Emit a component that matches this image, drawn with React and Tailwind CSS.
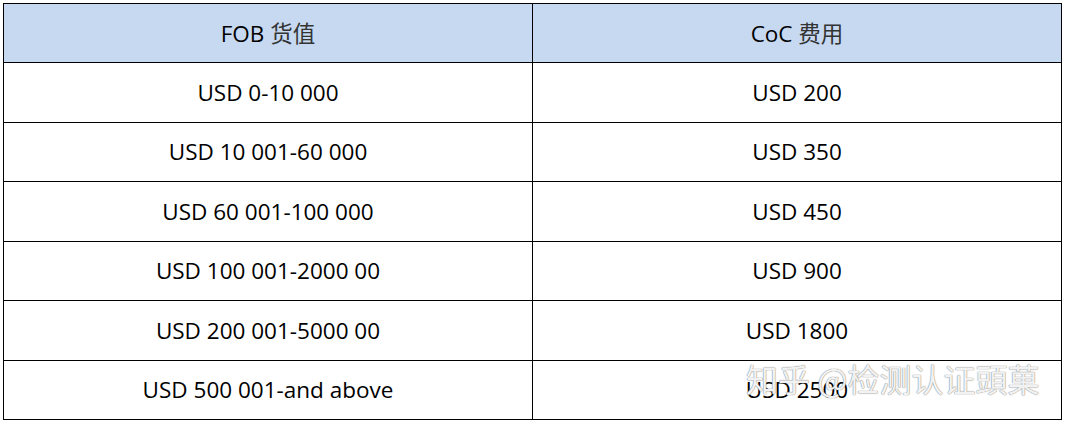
import React from "react";

const rows = [
  ["USD 0-10 000", "USD 200"],
  ["USD 10 001-60 000", "USD 350"],
  ["USD 60 001-100 000", "USD 450"],
  ["USD 100 001-2000 00", "USD 900"],
  ["USD 200 001-5000 00", "USD 1800"],
  ["USD 500 001-and above", "USD 2500"],
];

// alternating heights so the lines land on the same pixels as the picture
const heights = ["h-[60px]", "h-[59px]", "h-[60px]", "h-[59px]", "h-[60px]", "h-[59px]"];

const App = () => {
  return (
    <div className="w-[1066px] h-[424px] bg-white pt-[3px] pl-[3px] font-['Open_Sans','Noto_Sans_CJK_SC',sans-serif] text-[22.5px] text-black">
      <div className="relative w-[1059px]">
        <table className="w-full border-collapse border border-black table-fixed">
          <thead>
            <tr className="h-[59px] bg-[#c6d9f1]">
              <th className="border border-black font-normal">
                FOB <span className="font-['Noto_Sans_CJK_SC',sans-serif] text-[#333]">货值</span>
              </th>
              <th className="border border-black font-normal">
                CoC <span className="font-['Noto_Sans_CJK_SC',sans-serif] text-[#333]">费用</span>
              </th>
            </tr>
          </thead>
          <tbody>
            {rows.map((r, i) => (
              <tr key={i} className={heights[i]}>
                <td className="border border-black text-center">{r[0]}</td>
                <td className="border border-black text-center">{r[1]}</td>
              </tr>
            ))}
          </tbody>
        </table>

        {/* zhihu watermark lies over the last cell */}
        <div className="absolute left-[743px] top-[359px] font-['Noto_Sans_CJK_SC',sans-serif] text-[32px] leading-none text-white/90 whitespace-nowrap [text-shadow:0_0_1px_#777,0_0_1px_#999]">
          知乎 @检测认证頭菓
        </div>
      </div>
    </div>
  );
};

export default App;
